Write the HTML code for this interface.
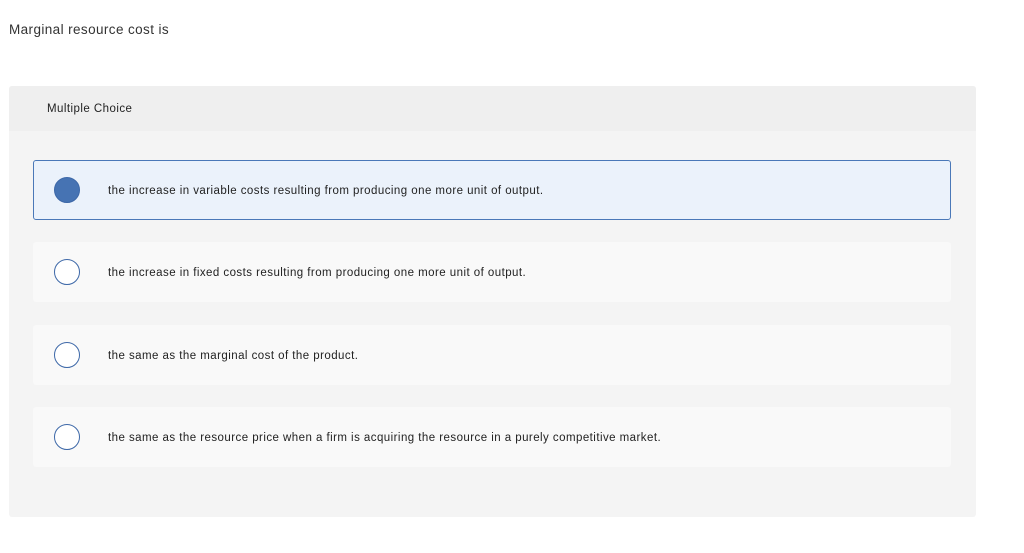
<!DOCTYPE html>
<html><head><style>
body{margin:0;background:#fff;font-family:"Liberation Sans",sans-serif;color:#222;width:1024px;height:553px;position:relative;overflow:hidden}
.q{position:absolute;left:9px;top:22px;font-size:13.5px;letter-spacing:0.4px;color:#333}
.box{position:absolute;left:9px;top:86px;width:967px;height:431px;background:#f4f4f4;border-radius:3px}
.hd{height:45px;background:#efefef;border-radius:3px 3px 0 0;font-size:11.5px;letter-spacing:0.45px;line-height:47px;padding-left:38px;color:#222}
.opt{position:absolute;left:24px;width:918px;height:60px;background:#f9f9f9;border-radius:3px;box-sizing:border-box}
.opt.sel{background:#ebf2fb;border:1px solid #4a78b8}
.r{position:absolute;left:21px;top:17px;width:26px;height:26px;border-radius:50%;border:1px solid #3d68a8;background:#fff;box-sizing:border-box}
.sel .r{background:#4673b3;left:20px;top:16px}
.t{position:absolute;left:75px;top:1px;line-height:60px;font-size:11.5px;letter-spacing:0.45px;color:#222;white-space:nowrap}
.sel .t{left:74px;top:0;line-height:60px}
</style></head><body>
<div class="q">Marginal resource cost is</div>
<div class="box">
<div class="hd">Multiple Choice</div>
<div class="opt sel" style="top:74px"><div class="r"></div><div class="t">the increase in variable costs resulting from producing one more unit of output.</div></div>
<div class="opt" style="top:156px"><div class="r"></div><div class="t">the increase in fixed costs resulting from producing one more unit of output.</div></div>
<div class="opt" style="top:239px"><div class="r"></div><div class="t">the same as the marginal cost of the product.</div></div>
<div class="opt" style="top:321px"><div class="r"></div><div class="t">the same as the resource price when a firm is acquiring the resource in a purely competitive market.</div></div>
</div>
</body></html>
